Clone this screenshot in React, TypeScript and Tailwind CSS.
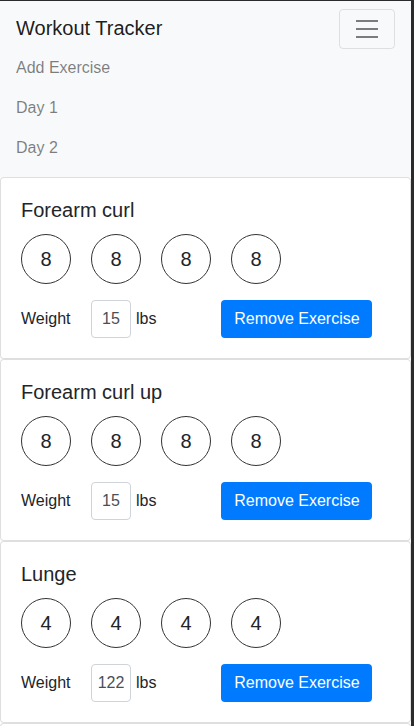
import React from "react";

type Exercise = { name: string; reps: number[]; weight: number };

const EXERCISES: Exercise[] = [
  { name: "Forearm curl", reps: [8, 8, 8, 8], weight: 15 },
  { name: "Forearm curl up", reps: [8, 8, 8, 8], weight: 15 },
  { name: "Lunge", reps: [4, 4, 4, 4], weight: 122 },
];

const NAV_LINKS = ["Add Exercise", "Day 1", "Day 2"];

function TogglerIcon() {
  return (
    <svg width="30" height="30" viewBox="0 0 30 30" aria-hidden="true">
      <path
        d="M4 7h22M4 15h22M4 23h22"
        stroke="rgba(0,0,0,0.5)"
        strokeWidth="2"
        strokeLinecap="butt"
        fill="none"
      />
    </svg>
  );
}

function Navbar() {
  return (
    <nav className="bg-[#f8f9fa] px-4 py-2">
      <div className="flex items-center justify-between">
        <a href="#" className="pt-[4px] pb-[6px] text-[20px] leading-[30px] text-[rgba(0,0,0,0.9)]">
          Workout Tracker
        </a>
        <button
          type="button"
          className="flex h-10 w-14 items-center justify-center rounded border border-[rgba(0,0,0,0.1)]"
        >
          <TogglerIcon />
        </button>
      </div>
      <ul className="flex flex-col">
        {NAV_LINKS.map((label) => (
          <li key={label}>
            <a href="#" className="block pt-[7px] pb-[9px] text-base leading-6 text-[rgba(0,0,0,0.5)]">
              {label}
            </a>
          </li>
        ))}
      </ul>
    </nav>
  );
}

function ExerciseCard({ exercise }: { exercise: Exercise }) {
  return (
    <div className="rounded border border-[rgba(0,0,0,0.125)] bg-white p-5">
      <h5 className="mb-3 text-[20px] leading-6 text-[#212529]">{exercise.name}</h5>
      <div className="flex gap-5">
        {exercise.reps.map((rep, i) => (
          <div
            key={i}
            className="flex h-[50px] w-[50px] items-center justify-center rounded-full border border-[#333] text-[20px] text-[#212529]"
          >
            {rep}
          </div>
        ))}
      </div>
      <div className="mt-4 flex h-[38px] items-center text-base text-[#212529]">
        <span className="w-[70px] pb-px">Weight</span>
        <input
          readOnly
          value={exercise.weight}
          className="h-[38px] w-10 rounded border border-[#ced4da] bg-white px-0 pb-px text-center text-base text-[#495057] outline-none"
        />
        <span className="ml-[5px] pb-px">lbs</span>
        <button
          type="button"
          className="ml-[65px] h-[38px] w-[151px] rounded bg-[#007bff] pb-px text-base text-white"
        >
          Remove Exercise
        </button>
      </div>
    </div>
  );
}

export default function App() {
  return (
    <div className="h-[726px] overflow-hidden border-t border-r-[3px] border-[#2b2b2b] bg-white font-['Liberation_Sans',Arial,sans-serif]">
      <Navbar />
      <div className="flex flex-col">
        {EXERCISES.map((ex) => (
          <ExerciseCard key={ex.name} exercise={ex} />
        ))}
        <div className="h-20 rounded border border-[rgba(0,0,0,0.125)] bg-white" />
      </div>
    </div>
  );
}
